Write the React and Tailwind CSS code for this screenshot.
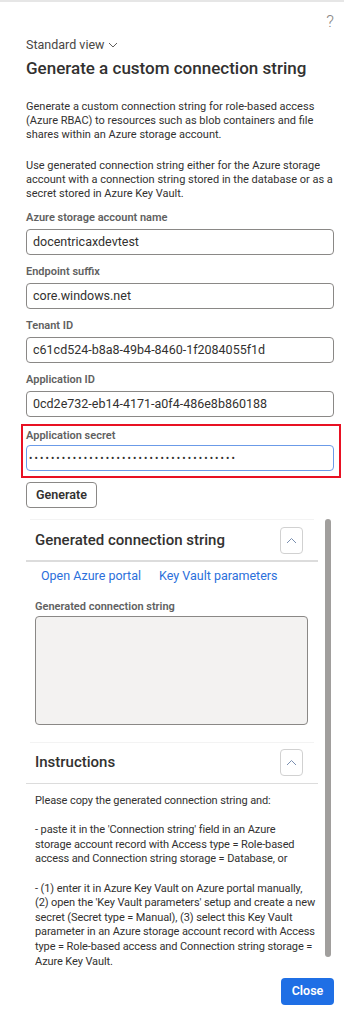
import React from "react";

const Field = ({ label, value }) => (
  <div className="mt-[10px]">
    <div className="text-[11px] leading-[14px] font-semibold text-[#616161]">{label}</div>
    <div className="mt-[4px] h-[26px] border border-[#8a8886] rounded-[4px] px-[6px] flex items-center text-[12.5px] text-[#323130]">
      {value}
    </div>
  </div>
);

const ChevronButton = () => (
  <button className="w-[23px] h-[27px] border border-[#d1d1d1] rounded-[4px] flex items-center justify-center bg-white">
    <svg width="11" height="7" viewBox="0 0 11 7" fill="none">
      <path d="M1 6 L5.5 1.5 L10 6" stroke="#7a8fb0" strokeWidth="1" />
    </svg>
  </button>
);

const SectionHeader = ({ title }) => (
  <div>
    <div className="mx-[4px] h-px bg-[#f3f3f3]" />
    <div className="flex items-center justify-between pl-[9px] pr-[15px] h-[40px]">
      <div className="text-[15px] font-medium text-[#323130]">{title}</div>
      <ChevronButton />
    </div>
    <div className="h-[1.5px] bg-[#dcdcdc]" />
  </div>
);

const Lines = ({ lines, className }) => (
  <p className={className}>
    {lines.map((l) => (
      <span key={l} className="block whitespace-nowrap">
        {l}
      </span>
    ))}
  </p>
);

export default function App() {
  return (
    <div
      className="w-full h-[1024px] bg-white border-t-2 border-[#e6e6e6] text-[#323130] overflow-hidden"
      style={{ fontFamily: 'Roboto, "Noto Sans", sans-serif' }}
    >
      <div className="flex justify-end pr-[10px] pt-[8px] h-[30px]">
        <span className="text-[17px] leading-[22px] font-light text-[#8a8886]">?</span>
      </div>
      <div className="pl-[26px] pr-[10px]">
        <div className="flex items-center gap-[4px] text-[12.5px] text-[#484644] mt-[4px] leading-[18px]">
          Standard view
          <svg width="10" height="6" viewBox="0 0 10 6" fill="none">
            <path d="M1 1 L5 5 L9 1" stroke="#605e5c" strokeWidth="1" />
          </svg>
        </div>
        <h1 className="text-[17px] leading-[24px] font-medium text-[#323130] mt-[2px]">
          Generate a custom connection string
        </h1>
        <p className="mt-[20px] text-[11px] leading-[14px]">
          Generate a custom connection string for role-based access (Azure RBAC) to resources such as blob containers and file shares within an Azure storage account.
        </p>
        <p className="mt-[17px] text-[11px] leading-[14px]">
          Use generated connection string either for the Azure storage account with a connection string stored in the database or as a secret stored in Azure Key Vault.
        </p>
        <div className="mt-[8px]">
          <Field label="Azure storage account name" value="docentricaxdevtest" />
          <Field label="Endpoint suffix" value="core.windows.net" />
          <Field label="Tenant ID" value="c61cd524-b8a8-49b4-8460-1f2084055f1d" />
          <Field label="Application ID" value="0cd2e732-eb14-4171-a0f4-486e8b860188" />
        </div>
        <div className="mt-[7px] -ml-[5px] -mr-[7px] border-2 border-[#e81123] pl-[3px] pr-[5px] pt-[3px] pb-[5px]">
          <div className="text-[11px] leading-[14px] font-semibold text-[#616161]">Application secret</div>
          <div className="mt-[2px] h-[26px] border border-[#6b9be8] rounded-[4px] px-[2px] flex items-center text-[10px] tracking-[2.1px] text-[#323130]">
            ••••••••••••••••••••••••••••••••••••••
          </div>
        </div>
        <button className="mt-[4px] h-[26px] px-[9px] border border-[#8a8886] rounded-[4px] text-[12.5px] font-semibold text-[#323130] bg-white">
          Generate
        </button>

        <div className="mt-[11px] flex gap-[7px]">
          <div className="w-[292px]">
            <SectionHeader title="Generated connection string" />
            <div className="flex gap-[18px] pl-[15px] mt-[5px] text-[12.5px] leading-[18px] text-[#2b6fdb]">
              <span>Open Azure portal</span>
              <span>Key Vault parameters</span>
            </div>
            <div className="pl-[9px] pr-[10px]">
              <div className="mt-[15px] text-[11px] leading-[14px] font-semibold text-[#616161]">
                Generated connection string
              </div>
              <div className="mt-[2px] h-[109px] bg-[#f3f2f1] border border-[#8a8886] rounded-[4px]" />
            </div>
            <div className="mt-[17px]">
              <SectionHeader title="Instructions" />
            </div>
            <div className="pl-[9px] mt-[10px] text-[11px] leading-[14.6px] tracking-[-0.1px]">
              <p>Please copy the generated connection string and:</p>
              <Lines
                className="mt-[14.6px]"
                lines={[
                  "- paste it in the 'Connection string' field in an Azure",
                  "storage account record with Access type = Role-based",
                  "access and Connection string storage = Database, or",
                ]}
              />
              <Lines
                className="mt-[14.6px]"
                lines={[
                  "- (1) enter it in Azure Key Vault on Azure portal manually,",
                  "(2) open the 'Key Vault parameters' setup and create a new",
                  "secret (Secret type = Manual), (3) select this Key Vault",
                  "parameter in an Azure storage account record with Access",
                  "type = Role-based access and Connection string storage =",
                  "Azure Key Vault.",
                ]}
              />
            </div>
          </div>
          <div className="w-[6px] h-[438px] rounded-full bg-[#a19f9d]" />
        </div>

        <div className="flex justify-end mt-[9px]">
          <button className="w-[53px] h-[27px] rounded-[4px] bg-[#1f6fe5] text-white text-[12.5px] font-semibold">
            Close
          </button>
        </div>
      </div>
    </div>
  );
}
